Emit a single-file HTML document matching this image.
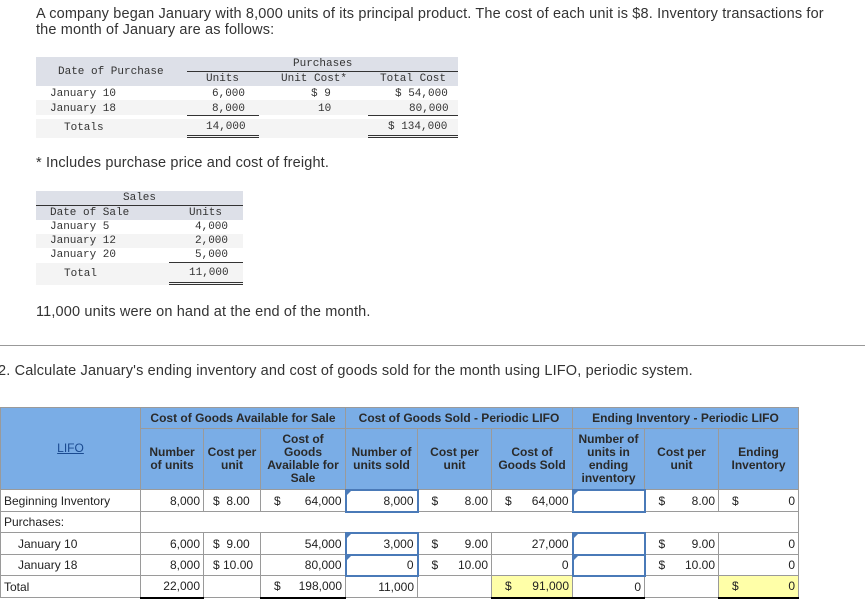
<!DOCTYPE html>
<html><head><meta charset="utf-8"><style>
*{margin:0;padding:0;box-sizing:border-box}
body{width:865px;height:610px;background:#fff;position:relative;overflow:hidden;font-family:"Liberation Sans",Arial,sans-serif;color:#333}
.a{position:absolute;white-space:nowrap}
.m{font-family:"Liberation Mono",monospace;font-size:11px;color:#333}
.p{font-size:14.5px;letter-spacing:0.15px}
.bg{position:absolute;background:#dde0e8}
.alt{position:absolute;background:#f4f4f4}
.ln{position:absolute;height:1px;background:#333}
table{position:absolute;left:0;top:407px;border-collapse:collapse;table-layout:fixed;font-size:12px;color:#222}
td{border:1px solid #9a9a9a;padding:0 3px;height:21px;white-space:nowrap}
.h{background:#7aade6;text-align:center;font-weight:bold;color:#2a2a2a;line-height:13px}
.r{text-align:right}
.in{border:2px solid #4a7ab8;position:relative}
.in:before{content:"";position:absolute;left:0;top:0;border-left:4px solid #4a7ab8;border-bottom:4px solid transparent}
.y{background:#ffffa8}
.s{float:left;margin-left:10px}
.bb{border-bottom:2px solid #000}
.cu{padding-left:9px}
</style></head><body>
<div class="a p" style="left:36px;top:6px">A company began January with 8,000 units of its principal product. The cost of each unit is $8. Inventory transactions for</div>
<div class="a p" style="left:36px;top:22px">the month of January are as follows:</div>

<div class="bg" style="left:36px;top:57px;width:422px;height:29px"></div>
<div class="alt" style="left:36px;top:100px;width:422px;height:15px"></div>
<div class="alt" style="left:36px;top:119px;width:422px;height:19px"></div>
<div class="a m" style="left:58px;top:66px">Date of Purchase</div>
<div class="a m" style="left:293px;top:58px">Purchases</div>
<div class="ln" style="left:187px;top:71px;width:271px"></div>
<div class="a m" style="left:206px;top:73px">Units</div>
<div class="a m" style="left:281px;top:73px">Unit Cost*</div>
<div class="a m" style="left:380px;top:73px">Total Cost</div>
<div class="a m" style="left:50px;top:88px">January 10</div>
<div class="a m" style="left:50px;top:103px">January 18</div>
<div class="a m" style="left:212px;top:88px">6,000</div>
<div class="a m" style="left:212px;top:103px">8,000</div>
<div class="a m" style="left:311px;top:88px">$ 9</div>
<div class="a m" style="left:318px;top:103px">10</div>
<div class="a m" style="left:395px;top:88px">$ 54,000</div>
<div class="a m" style="left:409px;top:103px">80,000</div>
<div class="ln" style="left:187px;top:115px;width:72px"></div>
<div class="ln" style="left:368px;top:115px;width:90px"></div>
<div class="a m" style="left:64px;top:122px">Totals</div>
<div class="a m" style="left:206px;top:121px">14,000</div>
<div class="a m" style="left:388px;top:121px">$ 134,000</div>
<div class="ln" style="left:187px;top:135px;width:72px"></div><div class="ln" style="left:187px;top:137px;width:72px"></div>
<div class="ln" style="left:368px;top:135px;width:90px"></div><div class="ln" style="left:368px;top:137px;width:90px"></div>

<div class="a p" style="left:36px;top:155px">* Includes purchase price and cost of freight.</div>

<div class="bg" style="left:36px;top:191px;width:207px;height:29px"></div>
<div class="alt" style="left:36px;top:234px;width:207px;height:14px"></div>
<div class="alt" style="left:36px;top:263px;width:207px;height:22px"></div>
<div class="a m" style="left:123px;top:192px">Sales</div>
<div class="ln" style="left:36px;top:205px;width:207px"></div>
<div class="a m" style="left:50px;top:207px">Date of Sale</div>
<div class="a m" style="left:189px;top:207px">Units</div>
<div class="a m" style="left:50px;top:221px">January 5</div>
<div class="a m" style="left:50px;top:235px">January 12</div>
<div class="a m" style="left:50px;top:249px">January 20</div>
<div class="a m" style="left:195px;top:221px">4,000</div>
<div class="a m" style="left:195px;top:235px">2,000</div>
<div class="a m" style="left:195px;top:249px">5,000</div>
<div class="ln" style="left:169px;top:262px;width:74px"></div>
<div class="a m" style="left:64px;top:268px">Total</div>
<div class="a m" style="left:189px;top:267px">11,000</div>
<div class="ln" style="left:169px;top:282px;width:74px"></div><div class="ln" style="left:169px;top:284px;width:74px"></div>

<div class="a p" style="left:36px;top:304px">11,000 units were on hand at the end of the month.</div>
<div style="position:absolute;left:0;top:345px;width:865px;height:1px;background:#999"></div>
<div class="a p" style="left:-2px;top:363px">2. Calculate January's ending inventory and cost of goods sold for the month using LIFO, periodic system.</div>

<table>
<colgroup><col style="width:140px"><col style="width:63px"><col style="width:57px"><col style="width:85px"><col style="width:72px"><col style="width:74px"><col style="width:81px"><col style="width:72px"><col style="width:74px"><col style="width:80px"></colgroup>
<tr><td class="h" rowspan="2" style="font-weight:normal;color:#1a4a90;text-decoration:underline">LIFO</td><td class="h" colspan="3">Cost of Goods Available for Sale</td><td class="h" colspan="3">Cost of Goods Sold - Periodic LIFO</td><td class="h" colspan="3">Ending Inventory - Periodic LIFO</td></tr>
<tr style="height:61px"><td class="h">Number<br>of units</td><td class="h">Cost per<br>unit</td><td class="h">Cost of<br>Goods<br>Available for<br>Sale</td><td class="h">Number of<br>units sold</td><td class="h">Cost per<br>unit</td><td class="h">Cost of<br>Goods Sold</td><td class="h">Number of<br>units in<br>ending<br>inventory</td><td class="h">Cost per<br>unit</td><td class="h">Ending<br>Inventory</td></tr>
<tr style="height:22px"><td>Beginning Inventory</td><td class="r">8,000</td><td class="cu">$&nbsp; 8.00</td><td class="r"><span class="s">$</span>64,000</td><td class="r in">8,000</td><td class="r"><span class="s">$</span>8.00</td><td class="r"><span class="s">$</span>64,000</td><td class="in"></td><td class="r"><span class="s">$</span>8.00</td><td class="r"><span class="s">$</span>0</td></tr>
<tr style="height:21px"><td>Purchases:</td><td colspan="9"></td></tr>
<tr style="height:22px"><td style="padding-left:17px">January 10</td><td class="r">6,000</td><td class="cu">$&nbsp; 9.00</td><td class="r">54,000</td><td class="r in">3,000</td><td class="r"><span class="s">$</span>9.00</td><td class="r">27,000</td><td class="in"></td><td class="r"><span class="s">$</span>9.00</td><td class="r">0</td></tr>
<tr style="height:21px"><td style="padding-left:17px">January 18</td><td class="r">8,000</td><td class="cu">$ 10.00</td><td class="r">80,000</td><td class="r in">0</td><td class="r"><span class="s">$</span>10.00</td><td class="r">0</td><td class="in"></td><td class="r"><span class="s">$</span>10.00</td><td class="r">0</td></tr>
<tr style="height:22px"><td>Total</td><td class="r bb">22,000</td><td></td><td class="r bb"><span class="s">$</span>198,000</td><td class="r">11,000</td><td></td><td class="r y bb"><span class="s">$</span>91,000</td><td class="r bb">0</td><td></td><td class="r y bb"><span class="s">$</span>0</td></tr>
</table>
</body></html>
